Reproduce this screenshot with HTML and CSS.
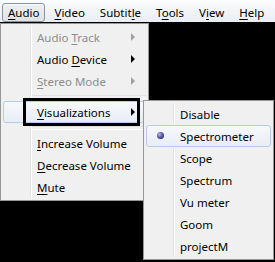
FILE: index.html
```html
<!DOCTYPE html>
<html lang="en">
<head>
  <meta charset="UTF-8" />
  <title>Audio menu</title>
  <link rel="stylesheet" href="styles.css">
</head>
<body>
  <div class="menubar">
    <div class="bar-item open"><u>A</u>udio</div>
    <div class="bar-item"><u>V</u>ideo</div>
    <div class="bar-item">Subtit<u>l</u>e</div>
    <div class="bar-item">T<u>o</u>ols</div>
    <div class="bar-item">V<u>i</u>ew</div>
    <div class="bar-item"><u>H</u>elp</div>
  </div>

  <div class="stage">
    <div class="menu main">
      <div class="item disabled">Audio <u>T</u>rack<span class="arrow"></span></div>
      <div class="item">Audio <u>D</u>evice<span class="arrow"></span></div>
      <div class="item disabled"><u>S</u>tereo Mode<span class="arrow"></span></div>
      <div class="sep"></div>
      <div class="item hover"><u>V</u>isualizations<span class="arrow"></span></div>
      <div class="sep"></div>
      <div class="item"><u>I</u>ncrease Volume</div>
      <div class="item"><u>D</u>ecrease Volume</div>
      <div class="item"><u>M</u>ute</div>
    </div>

    <div class="menu sub">
      <div class="item">Disable</div>
      <div class="item hover"><span class="radio"></span>Spectrometer</div>
      <div class="item">Scope</div>
      <div class="item">Spectrum</div>
      <div class="item">Vu meter</div>
      <div class="item">Goom</div>
      <div class="item">projectM</div>
    </div>

    <div class="focus"></div>
  </div>
</body>
</html>
```

FILE: styles.css
```css
* {
  margin: 0;
  padding: 0;
  box-sizing: border-box;
}

html, body {
  width: 275px;
  height: 262px;
  overflow: hidden;
  background: #000;
  font-family: 'Noto Sans', 'Open Sans', sans-serif;
  font-size: 11.5px;
  color: #000;
}

u {
  text-decoration: underline;
  text-underline-offset: 2px;
}

.menubar {
  height: 22px;
  display: flex;
  align-items: flex-end;
  padding-left: 2px;
  background: linear-gradient(#fbfcfd, #e9edf3);
}

.bar-item {
  height: 19px;
  line-height: 18px;
  padding: 0 5px;
  border: 1px solid transparent;
  border-radius: 3px;
  margin-right: 3px;
  white-space: nowrap;
}

.bar-item.open {
  border-color: #8e949c;
  background: linear-gradient(#eef0f3, #dee2e7);
  box-shadow: inset 0 1px 0 #fafbfc;
}

.stage {
  position: relative;
  height: 240px;
}

.menu {
  position: absolute;
  background: #f0f0f0;
  border: 1px solid #979797;
  padding: 2px;
  box-shadow: 2px 2px 2px rgba(0, 0, 0, 0.35);
}

/* gutter between the icon column and the labels */
.menu::before {
  content: '';
  position: absolute;
  top: 2px;
  bottom: 2px;
  left: 29px;
  width: 0;
  border-left: 1px solid #e2e3e3;
  border-right: 1px solid #fff;
}

.main {
  left: 0;
  top: 1px;
  width: 149px;
}

.sub {
  left: 143px;
  top: 78px;
  width: 131px;
  z-index: 2;
}

.item {
  position: relative;
  height: 22px;
  line-height: 21px;
  padding-left: 33px;
  border: 1px solid transparent;
  border-radius: 3px;
  white-space: nowrap;
  z-index: 1;
}

.item.disabled {
  color: #8d8d8d;
}

.item.hover {
  border-color: #b4cdec;
  background: linear-gradient(#f6f8fb, #e8eef6);
}

.sep {
  height: 9px;
  margin-left: 28px;
  display: flex;
  align-items: center;
}

.sep::after {
  content: '';
  flex: 1;
  height: 2px;
  border-top: 1px solid #e0e0e0;
  border-bottom: 1px solid #fff;
}

.arrow {
  position: absolute;
  right: 10px;
  top: 6px;
  border-left: 4px solid #000;
  border-top: 4px solid transparent;
  border-bottom: 4px solid transparent;
}

.disabled .arrow {
  border-left-color: #a0a0a0;
}

.radio {
  position: absolute;
  left: 10px;
  top: 6px;
  width: 7px;
  height: 7px;
  border-radius: 50%;
  background: radial-gradient(circle at 35% 35%, #b4b4e6, #4b4b9a 55%, #23235c);
}

.focus {
  position: absolute;
  left: 23px;
  top: 76px;
  width: 117px;
  height: 28px;
  border: 3px solid #000;
  z-index: 3;
}
```
